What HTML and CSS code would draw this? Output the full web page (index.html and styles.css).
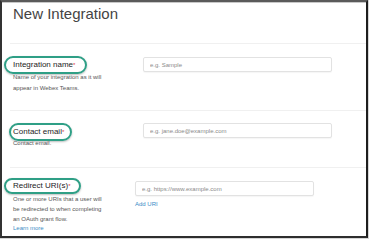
FILE: index.html
```html
<!DOCTYPE html>
<html lang="en">
<head>
    <meta charset="UTF-8">
    <meta name="viewport" content="width=device-width, initial-scale=1.0">
    <title>New Integration</title>
    <link rel="stylesheet" href="styles.css">
</head>
<body>
    <div class="frame">
        <div class="header">
            <h1>New Integration</h1>
        </div>

        <div class="row row-name">
            <div class="info">
                <span class="label">Integration name<span class="req">*</span></span>
                <p class="desc">Name of your integration as it will<br>appear in Webex Teams.</p>
            </div>
            <div class="field">
                <input type="text" placeholder="e.g. Sample">
            </div>
        </div>

        <div class="row row-email">
            <div class="info">
                <span class="label">Contact email<span class="req">*</span></span>
                <p class="desc">Contact email.</p>
            </div>
            <div class="field">
                <input type="text" placeholder="e.g. jane.doe@example.com">
            </div>
        </div>

        <div class="row row-uri">
            <div class="info">
                <span class="label">Redirect URI(s)<span class="req">*</span></span>
                <p class="desc">One or more URIs that a user will<br>be redirected to when completing<br>an OAuth grant flow.</p>
                <a class="more" href="#">Learn more</a>
            </div>
            <div class="field">
                <input type="text" placeholder="e.g. https://www.example.com">
                <a class="add" href="#">Add URI</a>
            </div>
        </div>
    </div>
</body>
</html>
```

FILE: styles.css
```css
body {
    margin: 0;
    padding: 0;
    background: #d6d6d6;
    font-family: "Liberation Sans", Arial, sans-serif;
}

.frame {
    width: 368px;
    height: 238px;
    box-sizing: border-box;
    background: #fff;
    border-left: 2px solid #333;
    border-top: 2px solid #5a5a5a;
    border-right: 2px solid #1e1e1e;
    border-bottom: 2px solid #2e2e2e;
    box-shadow: inset 0 1px 0 #c8c8c8;
    display: flex;
    flex-direction: column;
    overflow: hidden;
}

.header {
    margin-left: 8px;
    height: 41px;
    border-bottom: 1px solid #f0f0f0;
    flex-shrink: 0;
}

.header h1 {
    margin: 0;
    padding: 3px 0 0 3px;
    font-size: 15px;
    line-height: 18px;
    font-weight: normal;
    color: #444;
}

.row {
    display: flex;
    margin-left: 8px;
    padding-top: 9px;
    box-sizing: border-box;
    border-bottom: 1px solid #f0f0f0;
    flex-shrink: 0;
}

.row-name {
    height: 67px;
}

.row-email {
    height: 57px;
}

.row-uri {
    flex: 1;
    padding-top: 6px;
    border-bottom: none;
}

.info {
    width: 133px;
    flex-shrink: 0;
}

.row-uri .info {
    width: 125px;
}

.label {
    display: inline-block;
    margin-left: -6px;
    padding: 2px 10px 2px 7px;
    font-size: 8px;
    line-height: 10px;
    color: #1c1c1c;
    border: 2px solid #2f9f86;
    border-radius: 9px;
    box-shadow: 0 1px 2px rgba(0, 0, 0, 0.25);
}

.row-email .label {
    margin-left: -1px;
    margin-top: 2px;
    padding: 2px 6px 2px 2px;
}

.row-uri .label {
    padding: 1px 9px 1px 7px;
}

.req {
    color: #e0343a;
    font-size: 6px;
    vertical-align: top;
}

.desc {
    margin: -2px 0 0 3px;
    font-size: 6px;
    line-height: 11px;
    color: #555;
}

.row-email .desc {
    margin-top: -3px;
}

.row-uri .desc {
    margin-top: 0;
    line-height: 10px;
}

.more,
.add {
    display: block;
    font-size: 6px;
    line-height: 8px;
    color: #3a8cc6;
    text-decoration: none;
}

.more {
    margin-left: 3px;
}

.field {
    padding-top: 4px;
    display: flex;
    flex-direction: column;
    align-items: flex-start;
}

.row-email .field {
    padding-top: 3px;
}

.row-uri .field {
    padding-top: 7px;
}

.field input {
    width: 189px;
    height: 15px;
    box-sizing: border-box;
    margin: 0;
    padding: 0 6px;
    border: 1px solid #e2e2e2;
    border-radius: 2px;
    box-shadow: 0 1px 1px rgba(0, 0, 0, 0.04);
    font-family: "Liberation Sans", Arial, sans-serif;
    font-size: 6px;
    color: #333;
}

.row-uri .field input {
    width: 179px;
}

.field input::placeholder {
    color: #8a8a8a;
}

.add {
    margin-top: 4px;
}
```
